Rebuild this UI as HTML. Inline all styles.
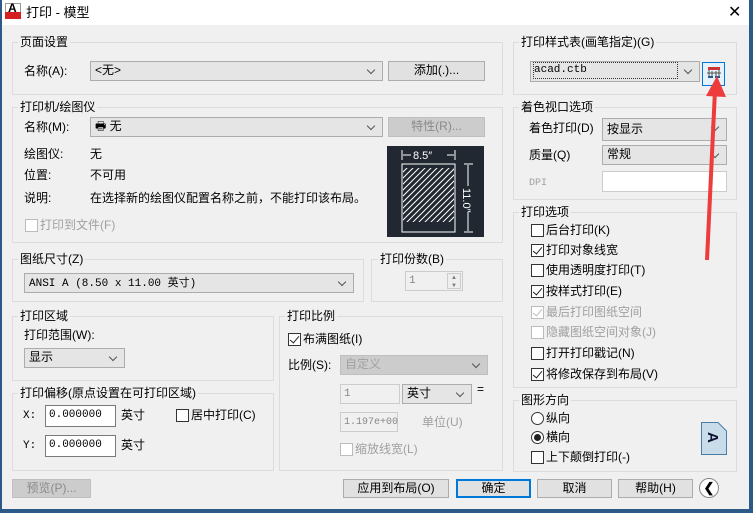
<!DOCTYPE html>
<html><head><meta charset="utf-8"><style>
*{box-sizing:border-box;margin:0;padding:0}
body{width:753px;height:513px;background:#f0f0f0;font-family:"Liberation Sans","Noto Sans CJK SC",sans-serif;font-size:12px;color:#000;position:relative;overflow:hidden}
.a{position:absolute;white-space:nowrap;line-height:14px}
.g{position:absolute;border:1px solid #dcdcdc}
.gl{position:absolute;background:#f0f0f0;padding:0 2px;line-height:14px;white-space:nowrap}
.cb{position:absolute;background:#e5e5e5;border:1px solid #acacac;padding-left:4px;line-height:17px}
.cb:after{content:"";position:absolute;right:8px;top:5px;width:5px;height:5px;border-right:1px solid #555;border-bottom:1px solid #555;transform:rotate(45deg)}
.dis{color:#a0a0a0}
.cb.dis{background:#cccccc;border-color:#bfbfbf}
.btn{position:absolute;background:#e1e1e1;border:1px solid #adadad;text-align:center;line-height:17px}
.btn.dis{background:#cccccc;border-color:#bfbfbf;color:#8a8a8a}
.in{position:absolute;background:#fff;border:1px solid #7a7a7a;padding-left:3px;line-height:19px}
.in.dis{border-color:#ccc;color:#888;background:#f0f0f0}
.ck{position:absolute;width:13px;height:13px;border:1px solid #333;background:#fff}
.ck.on:after{content:"";position:absolute;left:3px;top:0px;width:4px;height:8px;border-right:1.5px solid #222;border-bottom:1.5px solid #222;transform:rotate(40deg)}
.ck.d{border-color:#bcbcbc}
.ck.d.on:after{border-color:#bcbcbc}
.rd{position:absolute;width:13px;height:13px;border:1px solid #333;border-radius:50%;background:#fff}
.mono{font-family:"Liberation Mono",monospace;font-size:11px}
</style></head><body>
<!-- window frame -->
<div class="a" style="left:0;top:0;width:753px;height:25px;background:#fff"></div>
<div class="a" style="left:0;top:0;width:2px;height:513px;background:#2b5a86"></div>
<div class="a" style="left:749px;top:0;width:4px;height:513px;background:#2b5a86"></div>
<div class="a" style="left:0;top:509px;width:753px;height:4px;background:#2b5a86"></div>
<div class="a" style="left:5px;top:3px;width:16px;height:16px;background:#fff;border:1px solid #999"></div>
<div class="a" style="left:5px;top:12px;width:16px;height:7px;background:#d42020"></div>
<div class="a" style="left:8px;top:1px;font-size:12px;font-weight:bold">A</div>
<div class="a" style="left:26px;top:6px;font-size:13px">打印 - 模型</div>
<div class="a" style="left:728px;top:4px;font-size:16px;line-height:18px">✕</div>

<!-- 页面设置 -->
<div class="g" style="left:12px;top:42px;width:491px;height:53px"></div>
<div class="gl" style="left:18px;top:35px">页面设置</div>
<div class="a" style="left:24px;top:64px">名称(A):</div>
<div class="cb" style="left:90px;top:61px;width:293px;height:20px">&lt;无&gt;</div>
<div class="btn" style="left:388px;top:61px;width:97px;height:20px">添加(.)...</div>

<!-- 打印机 -->
<div class="g" style="left:12px;top:107px;width:491px;height:136px"></div>
<div class="gl" style="left:18px;top:100px">打印机/绘图仪</div>
<div class="a" style="left:24px;top:120px">名称(M):</div>
<div class="cb" style="left:90px;top:117px;width:293px;height:20px">🖶 无</div>
<div class="btn dis" style="left:388px;top:117px;width:97px;height:20px">特性(R)...</div>
<div class="a" style="left:24px;top:147px">绘图仪:</div><div class="a" style="left:90px;top:147px">无</div>
<div class="a" style="left:24px;top:168px">位置:</div><div class="a" style="left:90px;top:168px">不可用</div>
<div class="a" style="left:24px;top:191px">说明:</div><div class="a" style="left:90px;top:191px">在选择新的绘图仪配置名称之前，不能打印该布局。</div>
<div class="ck d" style="left:25px;top:219px"></div><div class="a dis" style="left:40px;top:218px">打印到文件(F)</div>
<svg class="a" style="left:387px;top:146px" width="97" height="91">
<rect width="97" height="91" fill="#222831"/>
<defs><clipPath id="c"><rect x="16" y="22" width="51" height="54"/></clipPath></defs>
<rect x="15" y="18" width="53" height="68" fill="none" stroke="#fff"/>
<g clip-path="url(#c)" stroke="#fff" stroke-width="1">
<path d="M10 80L70 20M10 74L70 14M10 86L70 26M10 68L70 8M10 92L70 32M10 62L70 2M10 98L70 38M10 56L70-4M10 104L70 44M10 50L70-10M10 110L70 50M10 44L70-16M10 116L70 56M10 38L70-22M10 122L70 62M10 32L70-28M10 128L70 68M10 26L70-34M10 134L70 74M10 140L70 80"/>
</g>
<path d="M15 4V14M68 4V14M16 9H24M60 9H67M77 18H86M77 86H86M81 19V40M81 66V85" stroke="#fff" fill="none"/>
<text x="26" y="13" fill="#fff" font-size="11" font-family="Liberation Sans">8.5″</text>
<text x="0" y="0" fill="#fff" font-size="11" font-family="Liberation Sans" transform="translate(76,42) rotate(90)">11.0″</text>
</svg>

<!-- 图纸尺寸 -->
<div class="g" style="left:12px;top:259px;width:352px;height:43px"></div>
<div class="gl" style="left:18px;top:252px">图纸尺寸(Z)</div>
<div class="cb mono" style="left:24px;top:273px;width:330px;height:20px">ANSI A (8.50 x 11.00 <span style="font-family:'Noto Sans CJK SC'">英寸</span>)</div>
<div class="g" style="left:371px;top:259px;width:132px;height:43px"></div>
<div class="gl" style="left:378px;top:252px">打印份数(B)</div>
<div class="in dis mono" style="left:405px;top:271px;width:58px;height:20px">1</div>
<div class="a" style="left:447px;top:273px;width:14px;height:16px;border:1px solid #ccc;background:#eee;font-size:6px;line-height:8px;text-align:center;color:#777">▲<br>▼</div>

<!-- 打印区域 -->
<div class="g" style="left:12px;top:316px;width:262px;height:65px"></div>
<div class="gl" style="left:18px;top:309px">打印区域</div>
<div class="a" style="left:24px;top:328px">打印范围(W):</div>
<div class="cb" style="left:24px;top:348px;width:101px;height:20px">显示</div>

<!-- 打印偏移 -->
<div class="g" style="left:12px;top:393px;width:262px;height:78px"></div>
<div class="gl" style="left:18px;top:386px">打印偏移(原点设置在可打印区域)</div>
<div class="a mono" style="left:23px;top:409px">X:</div>
<div class="in mono" style="left:45px;top:405px;width:71px;height:22px">0.000000</div>
<div class="a" style="left:121px;top:408px">英寸</div>
<div class="ck" style="left:176px;top:409px"></div><div class="a" style="left:191px;top:408px">居中打印(C)</div>
<div class="a mono" style="left:23px;top:439px">Y:</div>
<div class="in mono" style="left:45px;top:435px;width:71px;height:22px">0.000000</div>
<div class="a" style="left:121px;top:438px">英寸</div>

<!-- 打印比例 -->
<div class="g" style="left:279px;top:316px;width:224px;height:155px"></div>
<div class="gl" style="left:285px;top:309px">打印比例</div>
<div class="ck on" style="left:288px;top:333px"></div><div class="a" style="left:303px;top:332px">布满图纸(I)</div>
<div class="a" style="left:288px;top:358px">比例(S):</div>
<div class="cb dis" style="left:340px;top:355px;width:148px;height:20px">自定义</div>
<div class="in dis mono" style="left:340px;top:384px;width:60px;height:20px">1</div>
<div class="cb" style="left:402px;top:384px;width:70px;height:20px">英寸</div>
<div class="a" style="left:477px;top:382px">=</div>
<div class="in dis mono" style="left:340px;top:412px;width:58px;height:20px;font-size:10px">1.197e+00</div>
<div class="a dis" style="left:422px;top:415px">单位(U)</div>
<div class="ck d" style="left:340px;top:443px"></div><div class="a dis" style="left:355px;top:442px">缩放线宽(L)</div>

<!-- bottom buttons -->
<div class="btn dis" style="left:12px;top:479px;width:79px;height:19px">预览(P)...</div>
<div class="btn" style="left:343px;top:479px;width:106px;height:19px">应用到布局(O)</div>
<div class="btn" style="left:456px;top:479px;width:75px;height:19px;border:2px solid #0078d7;line-height:15px">确定</div>
<div class="btn" style="left:537px;top:479px;width:75px;height:19px">取消</div>
<div class="btn" style="left:618px;top:479px;width:75px;height:19px">帮助(H)</div>
<div class="a" style="left:699px;top:478px;width:20px;height:20px;border-radius:50%;border:1px solid #888;background:#fff;text-align:center;font-weight:bold;line-height:18px;font-size:13px">❮</div>

<!-- 打印样式表 -->
<div class="g" style="left:513px;top:42px;width:224px;height:53px"></div>
<div class="gl" style="left:519px;top:35px">打印样式表(画笔指定)(G)</div>
<div class="cb mono" style="left:530px;top:61px;width:170px;height:21px"><span style="border:1px dotted #333;display:inline-block;width:145px;line-height:15px;margin-left:-2px">acad.ctb</span></div>
<div class="a" style="left:702px;top:62px;width:23px;height:24px;border:1px solid #0078d7;background:#e5f1fb"></div>
<svg class="a" style="left:706px;top:66px" width="16" height="14"><rect x="2" y="1" width="12" height="3" fill="#c33"/><path d="M3 4V10M13 4V10M6 5V10M10 5V10M1 7H15" stroke="#555"/><path d="M2 11H7M9 11H14" stroke="#2a5b8a" stroke-width="2"/></svg>

<!-- 着色视口选项 -->
<div class="g" style="left:513px;top:107px;width:224px;height:93px"></div>
<div class="gl" style="left:519px;top:100px">着色视口选项</div>
<div class="a" style="left:529px;top:121px">着色打印(D)</div>
<div class="cb" style="left:602px;top:118px;width:125px;height:23px;line-height:21px">按显示</div>
<div class="a" style="left:529px;top:148px">质量(Q)</div>
<div class="cb" style="left:602px;top:145px;width:125px;height:20px">常规</div>
<div class="a dis mono" style="left:529px;top:177px;font-size:10px">DPI</div>
<div class="in" style="left:602px;top:171px;width:125px;height:21px;border-color:#ccc"></div>

<!-- 打印选项 -->
<div class="g" style="left:513px;top:212px;width:224px;height:176px"></div>
<div class="gl" style="left:519px;top:205px">打印选项</div>
<div class="ck" style="left:531px;top:224px"></div><div class="a" style="left:546px;top:223px">后台打印(K)</div>
<div class="ck on" style="left:531px;top:244px"></div><div class="a" style="left:546px;top:243px">打印对象线宽</div>
<div class="ck" style="left:531px;top:264px"></div><div class="a" style="left:546px;top:263px">使用透明度打印(T)</div>
<div class="ck on" style="left:531px;top:285px"></div><div class="a" style="left:546px;top:284px">按样式打印(E)</div>
<div class="ck d on" style="left:531px;top:306px"></div><div class="a dis" style="left:546px;top:305px">最后打印图纸空间</div>
<div class="ck d" style="left:531px;top:326px"></div><div class="a dis" style="left:546px;top:325px">隐藏图纸空间对象(J)</div>
<div class="ck" style="left:531px;top:347px"></div><div class="a" style="left:546px;top:346px">打开打印戳记(N)</div>
<div class="ck on" style="left:531px;top:368px"></div><div class="a" style="left:546px;top:367px">将修改保存到布局(V)</div>

<!-- 图形方向 -->
<div class="g" style="left:513px;top:400px;width:224px;height:72px"></div>
<div class="gl" style="left:519px;top:393px">图形方向</div>
<div class="rd" style="left:531px;top:412px"></div><div class="a" style="left:546px;top:411px">纵向</div>
<div class="rd" style="left:531px;top:431px"><div style="position:absolute;left:2px;top:2px;width:7px;height:7px;border-radius:50%;background:#222"></div></div><div class="a" style="left:546px;top:430px">横向</div>
<div class="ck" style="left:531px;top:451px"></div><div class="a" style="left:546px;top:450px">上下颠倒打印(-)</div>
<svg class="a" style="left:701px;top:422px" width="26" height="33"><path d="M0.5 0.5H17L25.5 9V32.5H0.5Z" fill="#c9dcea" stroke="#4a7ca8"/><text x="0" y="0" font-size="15" font-family="Liberation Sans" font-weight="bold" fill="#113" transform="translate(7,10) rotate(90)">A</text></svg>

<!-- red arrow -->
<svg class="a" style="left:690px;top:70px" width="45" height="190"><path d="M17 190L25 20" stroke="#ee3b3b" stroke-width="4"/><path d="M27 6L16 26L36 27Z" fill="#ee3b3b"/></svg>
</body></html>
